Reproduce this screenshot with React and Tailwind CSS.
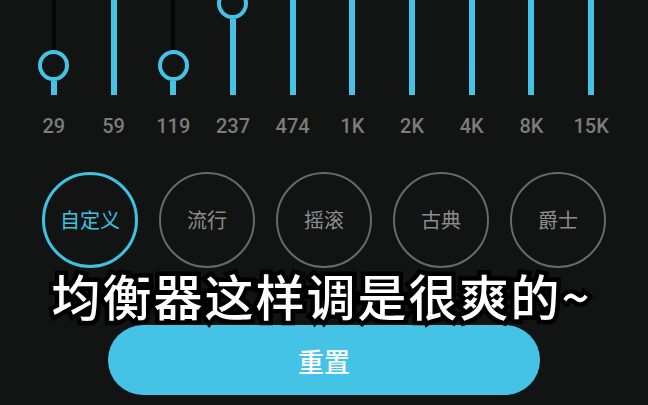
import React from "react";

const BLUE = "#45c3e6";

// knob: y of knob centre in px (null = knob above the top edge)
const bands = [
  { label: "29", knob: 65 },
  { label: "59", knob: null },
  { label: "119", knob: 65 },
  { label: "237", knob: 3 },
  { label: "474", knob: null },
  { label: "1K", knob: null },
  { label: "2K", knob: null },
  { label: "4K", knob: null },
  { label: "8K", knob: null },
  { label: "15K", knob: null },
];

const presets = ["自定义", "流行", "摇滚", "古典", "爵士"];

function Slider({ knob }) {
  return (
    <div className="flex h-[95px] flex-col items-center">
      {knob !== null && (
        <>
          {knob > 15 && (
            <div className="w-1 shrink-0 bg-[#060708]" style={{ height: knob - 15 }} />
          )}
          <div
            className="size-[31px] shrink-0 rounded-full border-4 border-[#45c3e6] bg-[#121413]"
            style={knob <= 15 ? { marginTop: knob - 15 } : undefined}
          />
        </>
      )}
      <div className="w-[6px] flex-1 bg-[#45c3e6]" />
    </div>
  );
}

export default function App() {
  return (
    <div className="relative h-[405px] w-[648px] overflow-hidden bg-[#121413] font-['Roboto','Noto_Sans_CJK_SC',sans-serif]">
      {/* Sliders */}
      <div className="grid grid-cols-10 pl-[24px] pr-[27px]">
        {bands.map((b) => (
          <div key={b.label} className="flex flex-col items-center">
            <Slider knob={b.knob} />
            <span className="mt-[19px] text-[20px] leading-6 font-medium text-[#7b7c7b]">
              {b.label}
            </span>
          </div>
        ))}
      </div>

      {/* Presets */}
      <div className="mt-[34px] flex justify-center gap-[21px]">
        {presets.map((p, i) => (
          <div
            key={p}
            className={
              i === 0
                ? "flex size-[96px] items-center justify-center rounded-full border-[3px] border-[#3ec2e0] text-[20px] text-[#3ec2e0] font-['Noto_Sans_CJK_SC',sans-serif]"
                : "flex size-[96px] items-center justify-center rounded-full border-2 border-[#686968] text-[20px] text-[#8b8c8b] font-['Noto_Sans_CJK_SC',sans-serif]"
            }
          >
            {p}
          </div>
        ))}
      </div>

      {/* Reset */}
      <div className="mt-[57px] flex justify-center">
        <button
          className="h-[70px] w-[432px] rounded-full text-[26px] font-medium text-white font-['Noto_Sans_CJK_SC',sans-serif]"
          style={{ backgroundColor: BLUE }}
        >
          重置
        </button>
      </div>

      {/* Video caption over the page */}
      <div className="absolute left-0 right-[5px] top-[270px] text-center text-[49px] leading-none font-medium tracking-[2px] text-white font-['Noto_Sans_CJK_SC',sans-serif] [-webkit-text-stroke:9px_#000] [paint-order:stroke_fill]">
        均衡器这样调是很爽的~
      </div>
    </div>
  );
}
